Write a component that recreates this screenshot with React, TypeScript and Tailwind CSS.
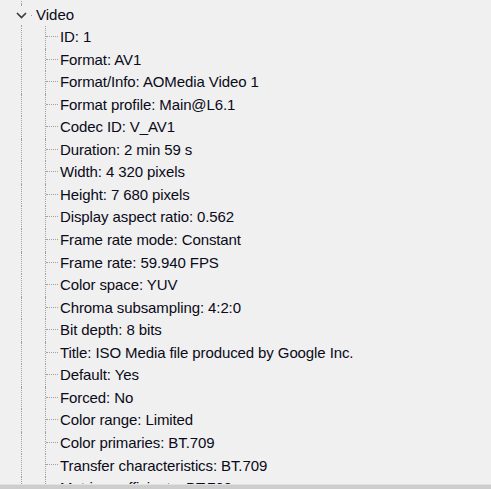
import React from 'react';

const items = [
  'ID: 1',
  'Format: AV1',
  'Format/Info: AOMedia Video 1',
  'Format profile: Main@L6.1',
  'Codec ID: V_AV1',
  'Duration: 2 min 59 s',
  'Width: 4 320 pixels',
  'Height: 7 680 pixels',
  'Display aspect ratio: 0.562',
  'Frame rate mode: Constant',
  'Frame rate: 59.940 FPS',
  'Color space: YUV',
  'Chroma subsampling: 4:2:0',
  'Bit depth: 8 bits',
  'Title: ISO Media file produced by Google Inc.',
  'Default: Yes',
  'Forced: No',
  'Color range: Limited',
  'Color primaries: BT.709',
  'Transfer characteristics: BT.709',
  'Matrix coefficients: BT.709',
];

function ChildRow({ text }: { text: string }) {
  return (
    <div className="flex h-[22.55px] items-stretch">
      <div className="w-[21px] shrink-0" />
      <div className="w-[24px] shrink-0 border-l border-dotted border-[#a0a0a0]" />
      <div className="w-[15px] shrink-0 border-l border-dotted border-[#a0a0a0]">
        <div className="h-[11px] w-[12px] border-b border-dotted border-[#a0a0a0]" />
      </div>
      <div className="flex items-center whitespace-nowrap tracking-[-0.1px]">{text}</div>
    </div>
  );
}

function App() {
  return (
    <div
      className="flex h-[489px] w-[491px] flex-col overflow-hidden bg-[#f0f0f0] text-[15px] text-[#0a0a18]"
      style={{ fontFamily: '"Liberation Sans", Arial, sans-serif' }}
    >
      <div className="flex-1 overflow-hidden">
        <div className="-mt-[19px]">
          {/* previous row, mostly scrolled out */}
          <div className="flex h-[22.55px] items-stretch">
            <div className="w-[21px] shrink-0" />
            <div className="w-[39px] shrink-0 border-l border-dotted border-[#a0a0a0]" />
            <div className="flex items-center whitespace-nowrap tracking-[-0.1px]">Overall bit rate: 44.3 Mb/s</div>
          </div>

          {/* Video node */}
          <div className="flex h-[22.55px] items-stretch">
            <div className="w-[21px] shrink-0" />
            <div className="relative w-[15px] shrink-0 border-l border-dotted border-[#a0a0a0]">
              <div className="absolute -left-[9px] top-[2px] flex h-[19px] w-[17px] items-center justify-center bg-[#f0f0f0]">
                <svg width="11" height="7" viewBox="0 0 11 7">
                  <path d="M1 1 L5.5 5.5 L10 1" fill="none" stroke="#3c3c3c" strokeWidth="1.7" />
                </svg>
              </div>
              <div className="absolute left-[9px] top-[11px] h-px w-px bg-[#a0a0a0]" />
            </div>
            <div className="flex items-center whitespace-nowrap">Video</div>
          </div>

          {items.map((t) => (
            <ChildRow key={t} text={t} />
          ))}
        </div>
      </div>
      <div className="h-[5px] shrink-0 border-t border-[#e2e2e2] bg-[#cdcdcd]" />
    </div>
  );
}

export default App;
